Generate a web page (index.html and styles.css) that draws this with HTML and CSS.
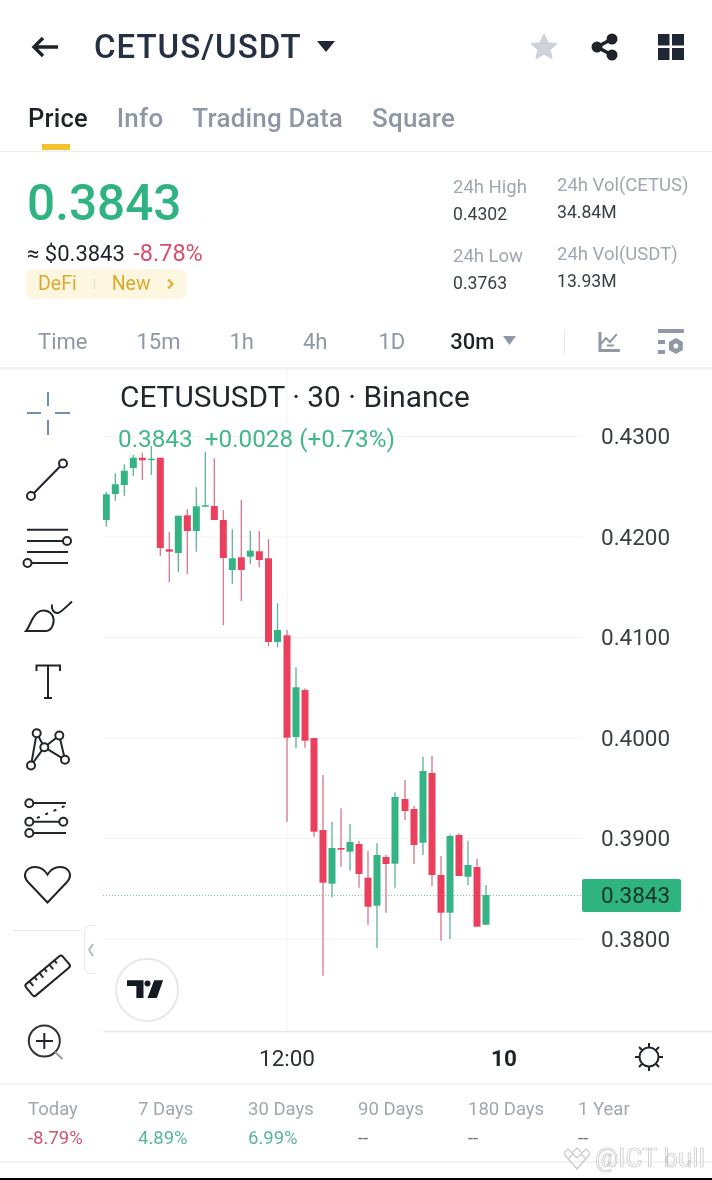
FILE: index.html
```html
<!DOCTYPE html>
<html lang="en">
<head>
<meta charset="utf-8">
<title>CETUS/USDT</title>
<link rel="stylesheet" href="styles.css">
</head>
<body>
<div class="page">
  <header class="topbar">
    <svg class="ico-back" viewBox="0 0 28 22"><path d="M27 11H3M12 2l-9 9 9 9"/></svg>
    <h1 class="pair">CETUS/USDT</h1>
    <svg class="ico-caret" viewBox="0 0 18 11"><path d="M0 0h18L9 11z"/></svg>
    <svg class="ico-star" viewBox="0 0 28 28"><path d="M14 2l3.6 8 8.4.9-6.300 5.700 1.800 8.400L14 20.700 6.500 25l1.800-8.400L2 10.900l8.400-.9z"/></svg>
    <svg class="ico-share" viewBox="0 0 28 28"><path class="ln" d="M21 6L6 14l15 8"/><circle cx="21" cy="6" r="5.500"/><circle cx="6" cy="14" r="5.500"/><circle cx="21" cy="22" r="5.500"/></svg>
    <svg class="ico-grid" viewBox="0 0 26 26"><path d="M0 0h11.500v11.500H0zM14 0h12v11.500H14zM0 14h11.500v12H0zM14 14h12v12H14z"/></svg>
  </header>

  <nav class="tabs">
    <span class="tab tab-on">Price</span>
    <span class="tab">Info</span>
    <span class="tab">Trading Data</span>
    <span class="tab">Square</span>
  </nav>

  <section class="stats">
    <div class="quote">
      <div class="last">0.3843</div>
      <div class="fiat">≈ $0.3843 <span class="down fiat-chg">-8.78%</span></div>
      <div class="pill"><span>DeFi</span><i class="pill-sep"></i><span>New</span><svg class="pill-chev" viewBox="0 0 8 12"><path d="M2 1.500L6.500 6 2 10.500"/></svg></div>
    </div>
    <div class="metrics metrics-a">
      <div class="metric"><span class="m-label">24h High</span><span class="m-val">0.4302</span></div>
      <div class="metric"><span class="m-label">24h Low</span><span class="m-val">0.3763</span></div>
    </div>
    <div class="metrics metrics-b">
      <div class="metric"><span class="m-label">24h Vol(CETUS)</span><span class="m-val">34.84M</span></div>
      <div class="metric"><span class="m-label">24h Vol(USDT)</span><span class="m-val">13.93M</span></div>
    </div>
  </section>

  <nav class="frames">
    <span class="frame">Time</span>
    <span class="frame">15m</span>
    <span class="frame">1h</span>
    <span class="frame">4h</span>
    <span class="frame frame-day">1D</span>
    <span class="frame frame-on">30m</span>
    <svg class="frame-caret" viewBox="0 0 13 9"><path d="M0 0h13L6.500 9z"/></svg>
    <i class="frame-sep"></i>
    <svg class="ico-ind" viewBox="0 0 22 22"><path d="M2 1v18.500h20"/><path class="zig" d="M3 13l5-6 4 4 7-8M9 14.500h7"/></svg>
    <svg class="ico-set" viewBox="0 0 26 26"><path d="M0 0h26v4H0zM0 11h7v4H0zM0 21h7v4H0z"/><path fill-rule="evenodd" d="M18 9l7 4v8l-7 4-7-4v-8zM18 14.500a2.500 2.500 0 1 0 .01 0z"/></svg>
  </nav>

  <main class="chart">
    <aside class="tools">
      <svg class="tool" viewBox="0 379 103 67.500"><path class="cross" d="M48 392v14M48 420v15M27 413h14M55 413h15"/></svg>
      <svg class="tool" viewBox="0 446.500 103 67.500"><path d="M34 492.500L60 466"/><circle cx="31" cy="495.500" r="4"/><circle cx="63" cy="463" r="4"/></svg>
      <svg class="tool" viewBox="0 514 103 67.500"><path d="M27 529.700h41M27 541h36M27 552h41M32 563h36"/><circle cx="67" cy="541" r="4"/><circle cx="27.500" cy="563" r="4"/></svg>
      <svg class="tool" viewBox="0 581.500 103 67.500"><path d="M26 630.500C30 626 31 618 37 612.500 42 608 50 610 53 616 55 622 52 630 46 630.500zM52 604c-1 5 2 9 6 8.500 3-.5 9-7 14-11.500"/></svg>
      <svg class="tool" viewBox="0 649 103 67.500"><path d="M36.500 671v-5.500h23.500v5.500M48 665.500V698M44 698h8"/></svg>
      <svg class="tool" viewBox="0 716.500 103 67.500"><path d="M36.700 732.700L31 765M36.700 732.700l7.600 14M44.300 746.700L31 765M44.300 746.700L59.300 735M44.300 746.700L65 759.300M59.300 735L65 759.300"/><circle cx="36.700" cy="732.700" r="4"/><circle cx="59.300" cy="735" r="4"/><circle cx="44.300" cy="746.700" r="4"/><circle cx="65" cy="759.300" r="4"/><circle cx="31" cy="765" r="4"/></svg>
      <svg class="tool" viewBox="0 784 103 67.500"><path d="M33 803h33M33 821.700h26M33 833h33"/><path class="dash" d="M37 818L65 806"/><circle cx="29.300" cy="803.300" r="4"/><circle cx="29.300" cy="821.700" r="4"/><circle cx="63.300" cy="821.700" r="4"/><circle cx="29.300" cy="833" r="4"/></svg>
      <svg class="tool" viewBox="0 851.500 103 67.500"><path d="M47.500 902L28 881.500c-7-8-.5-15 7-15 5.500 0 10 3.500 12.500 7.500 2.500-4 7-7.500 12.500-7.500 7.500 0 14 7 7 15z"/></svg>
      <i class="tools-sep"></i>
      <svg class="tool tool-sm" viewBox="0 942 103 67"><g transform="rotate(-40 47.300 975.700)"><rect x="23.500" y="968.500" width="48" height="15" rx="2.500"/><path d="M30 968.500v6M36.500 968.500v4M43 968.500v6M49.500 968.500v4M56 968.500v6M62.500 968.500v4"/></g></svg>
      <svg class="tool tool-sm" viewBox="0 1009 103 67"><circle class="big" cx="44.300" cy="1041" r="15.500"/><path d="M36 1041h17M44.300 1033v16"/><path class="handle" d="M55 1052l7.500 7"/></svg>
    </aside>

    <div class="plot">
      <svg class="plot-svg" viewBox="103 370 609 713">
        <path class="grid" d="M103 436.500H582M103 537H582M103 637.500H582M103 738H582M103 838.500H582M103 939H582M287 370V1031"/>
        <path class="axis" d="M103 1031.500H712"/>
        <path class="last-line" d="M103 895.500H582"/>
        <g class="wicks-g">
          <path d="M106.300 491.700V526.700M115.300 473.300V500.700M124.300 464.300V496M133.300 455V476M151.300 446V475M178.300 515.700V572M196.300 487.300V551.700M205.300 451.700V507M232.300 529.300V584M250.300 531V564.300M277.500 603.300V647.300M296 667.300V748.300M332 821.700V897.300M350 824V870.700M377 843.300V948M395 792.300V887.700M423 756.700V855M450 834.300V939M468 840.700V885M486 885V924.700"/>
        </g>
        <g class="wicks-r">
          <path d="M142.300 452.700V480M160.300 457.700V556M169.300 532V582M187.300 509V574M214.300 458.300V520M223.300 510V625M241.300 500V601M259.300 531V567.300M268.500 539.300V646M287 630V821.700M305 688.300V747.700M314 737.700V836.700M323 775V975.700M341 808.300V866.700M359 841V887.700M368 850.700V924.700M386 855V912.700M405 780V820M414 806V864M432 755.700V886M441 856V940.700M459 833.300V876M477 858.700V926.700"/>
        </g>
        <g class="bodies-g">
          <rect x="102.800" y="494.300" width="7" height="25.700"/><rect x="111.800" y="484.300" width="7" height="9.700"/><rect x="120.800" y="470.700" width="7" height="14.300"/><rect x="129.800" y="457.700" width="7" height="10.300"/><rect x="147.800" y="458.700" width="7" height="1.500"/><rect x="174.800" y="515.700" width="7" height="37.300"/><rect x="192.800" y="506.300" width="7" height="24.700"/><rect x="201.800" y="505.300" width="7" height="1.500"/><rect x="228.800" y="558.300" width="7" height="11.700"/><rect x="246.800" y="550.700" width="7" height="6"/><rect x="274" y="630" width="7" height="12"/><rect x="292.500" y="687.300" width="7" height="49.700"/><rect x="328.500" y="848" width="7" height="35.700"/><rect x="346.500" y="842" width="7" height="9.700"/><rect x="373.500" y="855" width="7" height="50.700"/><rect x="391.500" y="797" width="7" height="66.700"/><rect x="419.500" y="771" width="7" height="71.700"/><rect x="446.500" y="836" width="7" height="76.700"/><rect x="464.500" y="865" width="7" height="11.700"/><rect x="482.500" y="895" width="7" height="29.700"/>
        </g>
        <g class="bodies-r">
          <rect x="138.800" y="457.700" width="7" height="2.600"/><rect x="156.800" y="457.700" width="7" height="90.300"/><rect x="165.800" y="549.300" width="7" height="2.400"/><rect x="183.800" y="515.300" width="7" height="15.700"/><rect x="210.800" y="506" width="7" height="14"/><rect x="219.800" y="520" width="7" height="38"/><rect x="237.800" y="557.300" width="7" height="12.700"/><rect x="255.800" y="551.300" width="7" height="8.700"/><rect x="265" y="558.300" width="7" height="83.700"/><rect x="283.500" y="635.300" width="7" height="102.400"/><rect x="301.500" y="690" width="7" height="50.700"/><rect x="310.500" y="738" width="7" height="93.700"/><rect x="319.500" y="830" width="7" height="52.700"/><rect x="337.500" y="848" width="7" height="1.700"/><rect x="355.500" y="844" width="7" height="30"/><rect x="364.500" y="877.700" width="7" height="29"/><rect x="382.500" y="857" width="7" height="7"/><rect x="401.500" y="799" width="7" height="12"/><rect x="410.500" y="809" width="7" height="36"/><rect x="428.500" y="773" width="7" height="102"/><rect x="437.500" y="875" width="7" height="37.700"/><rect x="455.500" y="835" width="7" height="41"/><rect x="473.500" y="867" width="7" height="59.700"/>
        </g>
        <g class="price-axis">
          <text x="601" y="444">0.4300</text>
          <text x="601" y="545">0.4200</text>
          <text x="601" y="645">0.4100</text>
          <text x="601" y="746">0.4000</text>
          <text x="601" y="846">0.3900</text>
          <text x="601" y="947">0.3800</text>
        </g>
        <rect class="last-tag" x="582" y="879" width="99" height="33" rx="2"/>
        <text class="last-txt" x="601" y="903">0.3843</text>
        <text class="time-txt" x="287" y="1066">12:00</text>
        <text class="time-txt time-day" x="504" y="1066">10</text>
        <g class="sun">
          <circle cx="649" cy="1057" r="9.500"/>
          <path d="M649 1043v4.500M649 1066.500v4.500M635 1057h4.500M658.500 1057h4.500M639 1047l3 3M656 1064l3 3M659 1047l-3 3M642 1064l-3 3"/>
        </g>
      </svg>
      <div class="legend">
        <div class="legend-title">CETUSUSDT · 30 · Binance</div>
        <div class="legend-ohlc">0.3843<span class="legend-chg">+0.0028 (+0.73%)</span></div>
      </div>
      <button class="collapse"><svg viewBox="0 0 6 14"><path d="M5 1L1 7l4 6"/></svg></button>
      <div class="tv-badge">
        <svg viewBox="0 0 46 22"><path d="M0 0h18.500v20h-8V6.500H0zM40.500 0h-10L23 20h10.500z"/><circle cx="23" cy="3.800" r="3.400"/></svg>
      </div>
    </div>
  </main>

  <section class="periods">
    <div class="period"><span class="p-label">Today</span><span class="p-val down">-8.79%</span></div>
    <div class="period"><span class="p-label">7 Days</span><span class="p-val up">4.89%</span></div>
    <div class="period"><span class="p-label">30 Days</span><span class="p-val up">6.99%</span></div>
    <div class="period"><span class="p-label">90 Days</span><span class="p-val">--</span></div>
    <div class="period"><span class="p-label">180 Days</span><span class="p-val">--</span></div>
    <div class="period"><span class="p-label">1 Year</span><span class="p-val">--</span></div>
  </section>
  <div class="spacer"></div>
  <div class="blackbar"></div>

  <div class="watermark">
    <svg viewBox="0 0 28 26"><path d="M1 8l4-4 4 4 5-5 5 5 4-4 4 4M6 13l4-4 4 4 4-4 4 4M1 9l13 15L27 9"/></svg>
    <span>@ICT bull</span>
  </div>
</div>
</body>
</html>
```
FILE: styles.css
```css
* { box-sizing: border-box; margin: 0; padding: 0; }
html, body { background: #fff; }
body { font-family: Roboto, "Liberation Sans", sans-serif; color: #1e2329; }
.page { position: relative; width: 712px; height: 1180px; overflow: hidden; display: flex; flex-direction: column; background: #fff; filter: blur(0.45px); }

.topbar { height: 95px; display: flex; align-items: center; padding: 0 28px 0 31px; flex: none; }
.ico-back { width: 28px; height: 22px; margin-top: -1px; fill: none; stroke: #1e2329; stroke-width: 3.400; }
.pair { font-size: 33px; font-weight: 500; letter-spacing: 1px; color: #253044; margin-left: 35px; margin-top: -2px; line-height: 1; }
.ico-caret { width: 18px; height: 11px; margin-left: 15px; margin-top: -3px; fill: #1e2733; }
.ico-star { width: 28px; height: 28px; margin-left: auto; margin-top: -1px; fill: #cfd3d9; stroke: #cfd3d9; stroke-width: 2; stroke-linejoin: round; }
.ico-share { width: 28px; height: 28px; margin-left: 33px; margin-top: -1px; fill: #1e2329; }
.ico-share .ln { fill: none; stroke: #1e2329; stroke-width: 3.500; }
.ico-grid { width: 26px; height: 26px; margin-left: 39px; margin-top: -1px; fill: #1e2733; }

.tabs { height: 57px; display: flex; gap: 29px; padding: 8px 28px 0; border-bottom: 1px solid #ececec; flex: none; }
.tab { position: relative; font-size: 26px; font-weight: 500; letter-spacing: .2px; color: #8d97a5; line-height: 30px; }
.tab-on { color: #1e2329; font-size: 25.500px; }
.tab-on::after { content: ""; position: absolute; left: 14px; width: 28px; height: 6px; top: 41px; background: #f2c230; }

.stats { height: 169px; display: flex; padding: 0 0 0 27px; flex: none; }
.quote { flex: 1; }
.last { font-size: 49.500px; font-weight: 500; color: #2fb380; line-height: 59px; margin-top: 22px; }
.fiat { font-size: 22px; line-height: 26px; margin-top: 7px; color: #1e2329; }
.fiat-chg { font-size: 23.500px; margin-left: 3px; }
.down { color: #d84f6b; }
.up { color: #42b88a; }
.pill { width: 160px; height: 30px; margin-top: 2px; margin-left: -1px; padding: 0 12px; border-radius: 7px; background: #fdf6e1; color: #d8ab2c; font-size: 19.500px; line-height: 30px; display: flex; align-items: center; }
.pill-sep { width: 1px; height: 10px; background: #eadfbc; margin: 0 17px; }
.pill-chev { width: 8px; height: 12px; margin-left: 15px; fill: none; stroke: #e0b02a; stroke-width: 2.200; }
.metrics { display: flex; flex-direction: column; gap: 17px; }
.metrics-a { width: 104px; padding-top: 23px; }
.metrics-b { width: 155px; padding-top: 21px; }
.metric { display: flex; flex-direction: column; gap: 2px; }
.m-label { font-size: 18.500px; line-height: 25px; color: #a0a7b2; white-space: nowrap; }
.m-val { font-size: 17.600px; line-height: 25px; color: #39404a; }

.frames { height: 49px; display: flex; align-items: center; padding: 0 28px 5px 38px; border-bottom: 3px solid #f3f3f3; flex: none; }
.frame { font-size: 22px; color: #8f98a5; margin-right: 49px; line-height: 26px; }
.frame-day { margin-left: 2px; }
.frame-on { font-weight: 500; color: #1e2329; margin-left: -4px; margin-right: 9px; }
.frame-caret { width: 13px; height: 9px; margin-top: -2px; fill: #8f98a5; }
.frame-sep { width: 1px; height: 24px; background: #e8e8e8; margin-left: 48px; }
.ico-ind { width: 22px; height: 22px; margin-left: 33px; fill: none; stroke: #8f98a5; stroke-width: 3; }
.ico-ind .zig { stroke-width: 2; }
.ico-set { width: 26px; height: 26px; margin-left: 38px; fill: #8f98a5; }

.chart { position: relative; height: 713px; display: flex; flex: none; }
.tools { position: relative; width: 103px; flex: none; display: flex; flex-direction: column; padding-top: 9px; }
.tool { display: block; width: 103px; height: 67.500px; fill: none; stroke: #22262c; stroke-width: 2; flex: none; }
.tool circle { fill: #fff; }
.tool .big { fill: none; stroke: #333; }
.tool-sm { height: 67px; }
.tool .cross { stroke: #6c8fbb; stroke-width: 2; }
.tool .dash { stroke-dasharray: 3 6; }
.tool .handle { stroke: #9a9a9a; }
.tools-sep { display: block; width: 68px; height: 1px; background: #e6e6e6; margin: 11px 0 11px 13px; flex: none; }

.plot { position: relative; flex: 1; }
.plot-svg { display: block; width: 609px; height: 713px; }
.grid { fill: none; stroke: #f3f3f3; stroke-width: 1; }
.axis { fill: none; stroke: #e8e8e8; stroke-width: 1.500; }
.last-line { fill: none; stroke: #7cc4ab; stroke-width: 1; stroke-dasharray: 1 2; }
.wicks-g { fill: none; stroke: #5cb596; stroke-width: 1.300; }
.wicks-r { fill: none; stroke: #d5798c; stroke-width: 1.300; }
.bodies-g { fill: #34b384; }
.bodies-r { fill: #eb3f5e; }
.price-axis text, .last-txt { font-family: Roboto, sans-serif; font-size: 22.500px; fill: #3a3f47; }
.last-tag { fill: #2fb380; }
.last-txt { fill: #17352a; }
.time-txt { font-family: Roboto, sans-serif; font-size: 22.500px; fill: #2a2e35; text-anchor: middle; }
.time-day { font-weight: 700; fill: #1e2329; }
.sun { fill: none; stroke: #22262c; stroke-width: 2; }

.legend { position: absolute; left: 15px; top: 10px; pointer-events: none; }
.legend-title { font-size: 29.800px; line-height: 34px; color: #23272e; margin-left: 2px; white-space: nowrap; }
.legend-ohlc { font-size: 24.300px; line-height: 28px; margin-top: 11px; color: #42b88a; white-space: nowrap; }
.legend-chg { margin-left: 12px; }
.collapse { position: absolute; left: -19px; top: 555px; width: 12px; height: 49px; border: 1px solid #e6e9ee; border-right: 0; border-radius: 7px 0 0 7px; background: #fff; display: flex; align-items: center; justify-content: center; }
.collapse svg { width: 6px; height: 14px; fill: none; stroke: #a9b8c8; stroke-width: 1.800; }
.tv-badge { position: absolute; left: 12px; top: 588px; width: 64px; height: 64px; border: 2px solid #e8e8e8; border-radius: 50%; background: #fff; display: flex; align-items: center; justify-content: center; }
.tv-badge svg { width: 41px; height: 20px; fill: #151a22; }

.periods { height: 80px; display: flex; padding: 12px 0 0 28px; border-top: 2px solid #f3f3f3; border-bottom: 2px solid #f3f3f3; flex: none; }
.period { width: 110px; display: flex; flex-direction: column; gap: 5px; }
.p-label { font-size: 18.500px; line-height: 24px; color: #a0a7b2; white-space: nowrap; }
.p-val { font-size: 18.500px; line-height: 24px; white-space: nowrap; color: #6b7280; }
.p-val.down { color: #d0566f; }
.p-val.up { color: #55b892; }
.spacer { flex: 1; }
.blackbar { height: 2px; background: #000; flex: none; }

.watermark { position: absolute; left: 563px; top: 1144px; display: flex; align-items: center; gap: 4px; }
.watermark svg { width: 28px; height: 26px; fill: none; stroke: #c8c8c8; stroke-width: 1.200; }
.watermark span { font-size: 26px; line-height: 28px; color: rgba(255,255,255,.85); -webkit-text-stroke: 0.7px #c4c4c4; white-space: nowrap; }
```
